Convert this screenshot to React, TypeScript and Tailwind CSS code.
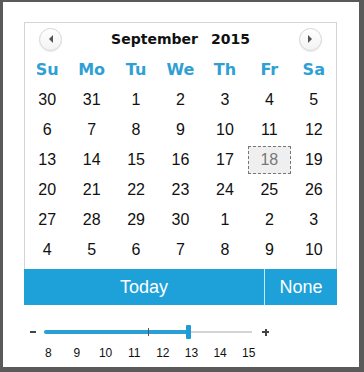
import React from 'react';

const DAY_NAMES = ['Su', 'Mo', 'Tu', 'We', 'Th', 'Fr', 'Sa'];

const WEEKS: number[][] = [
  [30, 31, 1, 2, 3, 4, 5],
  [6, 7, 8, 9, 10, 11, 12],
  [13, 14, 15, 16, 17, 18, 19],
  [20, 21, 22, 23, 24, 25, 26],
  [27, 28, 29, 30, 1, 2, 3],
  [4, 5, 6, 7, 8, 9, 10],
];

const SLIDER_LABELS = [8, 9, 10, 11, 12, 13, 14, 15];

const NavButton: React.FC<{ dir: 'left' | 'right' }> = ({ dir }) => (
  <button className="w-[23px] h-[23px] rounded-full border border-[#d6d6d6] bg-gradient-to-b from-white to-[#f3f3f3] shadow-[0_1px_1px_rgba(0,0,0,0.08)] flex items-center justify-center">
    <svg width="6" height="8" viewBox="0 0 6 8">
      {dir === 'left' ? (
        <polygon points="5,0 5,8 1,4" fill="#555" />
      ) : (
        <polygon points="1,0 1,8 5,4" fill="#555" />
      )}
    </svg>
  </button>
);

const App: React.FC = () => {
  return (
    <div className="w-[364px] h-[372px] bg-[#5a5a5a] pt-[2px] pl-[3px] pr-[5px] pb-[5px]">
      <div className="h-full bg-white pt-[20px] pl-[21px]">
        {/* calendar */}
        <div className="w-[313px]">
          <div className="border-l border-r border-t border-[#d4d4d4]">
            <div className="h-[32px] px-[14px] flex items-center justify-between">
              <NavButton dir="left" />
              <div className="flex gap-[13px] font-['DejaVu_Sans',sans-serif] font-bold text-[14px] text-[#111] leading-none">
                <span>September</span>
                <span>2015</span>
              </div>
              <NavButton dir="right" />
            </div>

            <div className="grid grid-cols-7 h-[30px] items-center">
              {DAY_NAMES.map(d => (
                <div
                  key={d}
                  className="text-center font-['DejaVu_Sans',sans-serif] font-bold text-[16px] text-[#2ea0d4] leading-none"
                >
                  {d}
                </div>
              ))}
            </div>

            <div className="pb-[4px]">
              {WEEKS.map((week, wi) => (
                <div key={wi} className="grid grid-cols-7 h-[30px]">
                  {week.map((day, di) => {
                    const selected = wi === 2 && di === 5;
                    return (
                      <div key={di} className="flex items-center justify-center">
                        {selected ? (
                          <div className="w-[43px] h-[28px] border border-dashed border-[#777] bg-[#efefef] flex items-center justify-center font-['Liberation_Sans',sans-serif] text-[16px] text-[#777]">
                            {day}
                          </div>
                        ) : (
                          <span className="font-['Liberation_Sans',sans-serif] text-[16px] text-[#111]">
                            {day}
                          </span>
                        )}
                      </div>
                    );
                  })}
                </div>
              ))}
            </div>
          </div>

          <div className="h-[36px] bg-[#1ea1d9] flex font-['Liberation_Sans',sans-serif] text-[18px] text-white">
            <button className="w-[240px] flex items-center justify-center">Today</button>
            <div className="w-px bg-[#c9e8f5]" />
            <button className="flex-1 flex items-center justify-center">None</button>
          </div>
        </div>

        {/* slider */}
        <div className="mt-[20px] -ml-[21px] pl-[27px] flex items-center h-[14px]">
          <div className="w-[6px] h-[2px] bg-[#444]" />
          <div className="relative ml-[8px] w-[208px] h-[14px]">
            <div className="absolute left-0 right-0 top-[6px] h-[2px] bg-[#d4d4d4]" />
            <div className="absolute left-0 w-[144px] top-[5px] h-[4px] rounded-full bg-[#2a9fd6]" />
            <div className="absolute left-[104px] top-[3px] w-px h-[8px] bg-[#555]" />
            <div className="absolute left-[142px] top-0 w-[5px] h-[14px] rounded-[1px] bg-[#1f9bd6]" />
          </div>
          <div className="relative ml-[10px] w-[7px] h-[7px]">
            <div className="absolute left-0 right-0 top-[2.5px] h-[2px] bg-[#444]" />
            <div className="absolute top-0 bottom-0 left-[2.5px] w-[2px] bg-[#444]" />
          </div>
        </div>
        <div className="mt-[5px] -ml-[21px] pl-[31px] grid grid-cols-8 w-[260px] font-['Liberation_Sans',sans-serif] text-[12px] text-[#111]">
          {SLIDER_LABELS.map(l => (
            <div key={l} className="text-center">
              {l}
            </div>
          ))}
        </div>
      </div>
    </div>
  );
};

export default App;
